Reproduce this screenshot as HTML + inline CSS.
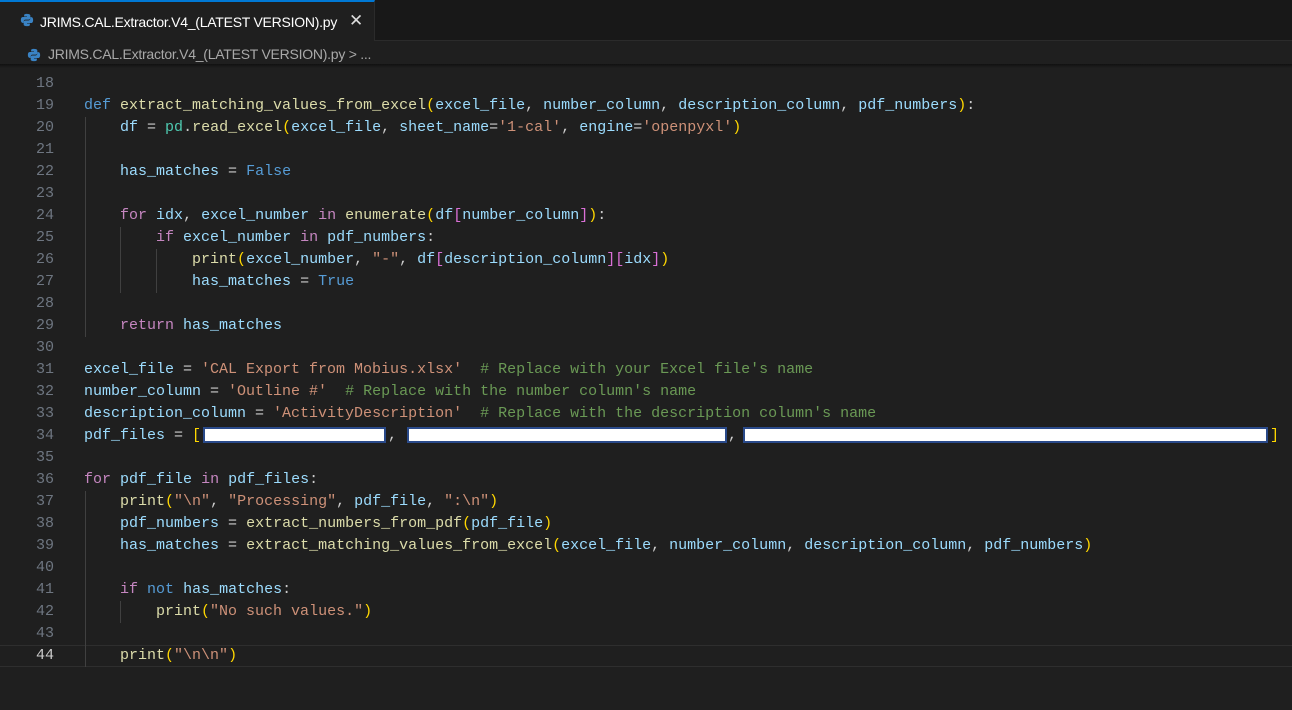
<!DOCTYPE html>
<html><head><meta charset="utf-8"><style>
*{margin:0;padding:0;box-sizing:border-box}
body{width:1292px;height:710px;background:#1f1f1f;overflow:hidden;position:relative;font-family:"Liberation Sans",sans-serif}
.tabbar{position:absolute;left:0;top:0;width:1292px;height:41px;background:#181818;border-bottom:1px solid #2b2b2b}
.tab{position:absolute;left:0;top:0;width:375px;height:41px;background:#1f1f1f;border-top:2px solid #0078d4;border-right:1px solid #2b2b2b;color:#fff;font-size:14px;letter-spacing:-0.25px}
.tab span{position:absolute;left:40px;top:12px}
.x{position:absolute;left:349px;top:9px;color:#ddd;font-size:17px}
.crumb{position:absolute;left:48px;top:46px;color:#a9a9a9;font-size:14px;letter-spacing:-0.25px}
.py{position:absolute;width:14px;height:14px}
.code{position:absolute;left:0;top:73px;font-family:"Liberation Mono",monospace;font-size:15px}
.l{height:22px;line-height:22px;white-space:pre;position:relative}
.n{position:absolute;left:0;width:54px;text-align:right;color:#6e7681}
.t{position:absolute;left:84px;color:#cccccc}
.k{color:#569cd6}.c{color:#c586c0}.f{color:#dcdcaa}.v{color:#9cdcfe}.s{color:#ce9178}.m{color:#6a9955}
.b1{color:#ffd700}.b2{color:#da70d6}.b3{color:#179fff}
.g{position:absolute;width:1px;background:#404040}
.red{position:absolute;background:#fff;border:2px solid #2a4a8a;height:16px;top:427px}
.shadow{position:absolute;left:0;top:64px;width:1292px;height:4px;background:linear-gradient(#111,transparent)}
</style></head><body>
<div class="tabbar"><div class="tab">
<svg class="py" style="left:20px;top:11px" viewBox="0 0 16 16"><path d="M7.9 1C4.5 1 4.7 2.5 4.7 2.5V4h3.3v.6H3.4S1 4.3 1 7.9s2.1 3.4 2.1 3.4h1.2V9.6s-.1-2.1 2.1-2.1h3.4s2 0 2-2V2.9S12.1 1 7.9 1z" fill="#3a83c4"/><path d="M8.1 15c3.4 0 3.2-1.5 3.2-1.5V12H8v-.6h4.6s2.4.3 2.4-3.3-2.1-3.4-2.1-3.4h-1.2v1.7s.1 2.1-2.1 2.1H6.2s-2 0-2 2v2.6S3.9 15 8.1 15z" fill="#3a83c4"/></svg>
<span>JRIMS.CAL.Extractor.V4_(LATEST VERSION).py</span><div class="x">✕</div></div></div>
<svg class="py" style="left:27px;top:48px" viewBox="0 0 16 16"><path d="M7.9 1C4.5 1 4.7 2.5 4.7 2.5V4h3.3v.6H3.4S1 4.3 1 7.9s2.1 3.4 2.1 3.4h1.2V9.6s-.1-2.1 2.1-2.1h3.4s2 0 2-2V2.9S12.1 1 7.9 1z" fill="#3a83c4"/><path d="M8.1 15c3.4 0 3.2-1.5 3.2-1.5V12H8v-.6h4.6s2.4.3 2.4-3.3-2.1-3.4-2.1-3.4h-1.2v1.7s.1 2.1-2.1 2.1H6.2s-2 0-2 2v2.6S3.9 15 8.1 15z" fill="#3a83c4"/></svg>
<div class="crumb">JRIMS.CAL.Extractor.V4_(LATEST VERSION).py &gt; ...</div>
<div class="shadow"></div>
<div style="position:absolute;left:0;top:645px;width:1292px;height:22px;border-top:1px solid #2e2e2e;border-bottom:1px solid #2e2e2e"></div>
<div class="g" style="left:85px;top:117px;height:220px"></div>
<div class="g" style="left:120px;top:227px;height:66px"></div>
<div class="g" style="left:156px;top:249px;height:44px"></div>
<div class="g" style="left:85px;top:491px;height:176px"></div>
<div class="g" style="left:120px;top:601px;height:22px"></div>
<div class="code">
<div class="l"><span class="n">18</span></div>
<div class="l"><span class="n">19</span><span class="t"><span class="k">def</span> <span class="f">extract_matching_values_from_excel</span><span class="b1">(</span><span class="v">excel_file</span>, <span class="v">number_column</span>, <span class="v">description_column</span>, <span class="v">pdf_numbers</span><span class="b1">)</span>:</span></div>
<div class="l"><span class="n">20</span><span class="t">    <span class="v">df</span> = <span class="v" style="color:#4ec9b0">pd</span>.<span class="f">read_excel</span><span class="b1">(</span><span class="v">excel_file</span>, <span class="v">sheet_name</span>=<span class="s">'1-cal'</span>, <span class="v">engine</span>=<span class="s">'openpyxl'</span><span class="b1">)</span></span></div>
<div class="l"><span class="n">21</span></div>
<div class="l"><span class="n">22</span><span class="t">    <span class="v">has_matches</span> = <span class="k">False</span></span></div>
<div class="l"><span class="n">23</span></div>
<div class="l"><span class="n">24</span><span class="t">    <span class="c">for</span> <span class="v">idx</span>, <span class="v">excel_number</span> <span class="c">in</span> <span class="f">enumerate</span><span class="b1">(</span><span class="v">df</span><span class="b2">[</span><span class="v">number_column</span><span class="b2">]</span><span class="b1">)</span>:</span></div>
<div class="l"><span class="n">25</span><span class="t">        <span class="c">if</span> <span class="v">excel_number</span> <span class="c">in</span> <span class="v">pdf_numbers</span>:</span></div>
<div class="l"><span class="n">26</span><span class="t">            <span class="f">print</span><span class="b1">(</span><span class="v">excel_number</span>, <span class="s">"-"</span>, <span class="v">df</span><span class="b2">[</span><span class="v">description_column</span><span class="b2">]</span><span class="b2">[</span><span class="v">idx</span><span class="b2">]</span><span class="b1">)</span></span></div>
<div class="l"><span class="n">27</span><span class="t">            <span class="v">has_matches</span> = <span class="k">True</span></span></div>
<div class="l"><span class="n">28</span></div>
<div class="l"><span class="n">29</span><span class="t">    <span class="c">return</span> <span class="v">has_matches</span></span></div>
<div class="l"><span class="n">30</span></div>
<div class="l"><span class="n">31</span><span class="t"><span class="v">excel_file</span> = <span class="s">'CAL Export from Mobius.xlsx'</span>  <span class="m"># Replace with your Excel file's name</span></span></div>
<div class="l"><span class="n">32</span><span class="t"><span class="v">number_column</span> = <span class="s">'Outline #'</span>  <span class="m"># Replace with the number column's name</span></span></div>
<div class="l"><span class="n">33</span><span class="t"><span class="v">description_column</span> = <span class="s">'ActivityDescription'</span>  <span class="m"># Replace with the description column's name</span></span></div>
<div class="l"><span class="n">34</span><span class="t"><span class="v">pdf_files</span> = <span class="b1">[</span></span><span class="t" style="left:388px">,</span><span class="t" style="left:728px">,</span><span class="t b1" style="left:1270px">]</span></div>
<div class="l"><span class="n">35</span></div>
<div class="l"><span class="n">36</span><span class="t"><span class="c">for</span> <span class="v">pdf_file</span> <span class="c">in</span> <span class="v">pdf_files</span>:</span></div>
<div class="l"><span class="n">37</span><span class="t">    <span class="f">print</span><span class="b1">(</span><span class="s">"\n"</span>, <span class="s">"Processing"</span>, <span class="v">pdf_file</span>, <span class="s">":\n"</span><span class="b1">)</span></span></div>
<div class="l"><span class="n">38</span><span class="t">    <span class="v">pdf_numbers</span> = <span class="f">extract_numbers_from_pdf</span><span class="b1">(</span><span class="v">pdf_file</span><span class="b1">)</span></span></div>
<div class="l"><span class="n">39</span><span class="t">    <span class="v">has_matches</span> = <span class="f">extract_matching_values_from_excel</span><span class="b1">(</span><span class="v">excel_file</span>, <span class="v">number_column</span>, <span class="v">description_column</span>, <span class="v">pdf_numbers</span><span class="b1">)</span></span></div>
<div class="l"><span class="n">40</span></div>
<div class="l"><span class="n">41</span><span class="t">    <span class="c">if</span> <span class="k">not</span> <span class="v">has_matches</span>:</span></div>
<div class="l"><span class="n">42</span><span class="t">        <span class="f">print</span><span class="b1">(</span><span class="s">"No such values."</span><span class="b1">)</span></span></div>
<div class="l"><span class="n">43</span></div>
<div class="l"><span class="n">44</span><span class="t">    <span class="f">print</span><span class="b1">(</span><span class="s">"\n\n"</span><span class="b1">)</span></span></div>
</div>
<style>.code .l:last-child .n{color:#ccc}</style>
<div class="red" style="left:203px;width:183px"></div>
<div class="red" style="left:407px;width:320px"></div>
<div class="red" style="left:743px;width:525px"></div>
</body></html>
